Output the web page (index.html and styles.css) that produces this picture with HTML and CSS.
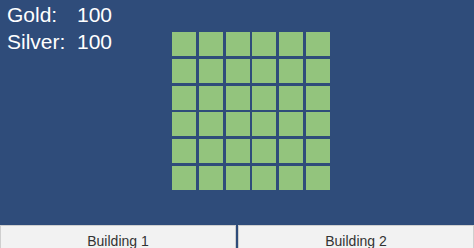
FILE: index.html
```html
<!DOCTYPE html>
<html>
<head>
<meta charset="utf-8">
<link rel="stylesheet" href="styles.css">
</head>
<body>
<div class="screen">
  <div class="main">
    <div class="stats">
      <span class="label">Gold:</span><span class="value">100</span>
      <span class="label">Silver:</span><span class="value">100</span>
    </div>
    <div class="board">
      <div class="tile"></div><div class="tile"></div><div class="tile"></div><div class="tile"></div><div class="tile"></div><div class="tile"></div>
      <div class="tile"></div><div class="tile"></div><div class="tile"></div><div class="tile"></div><div class="tile"></div><div class="tile"></div>
      <div class="tile"></div><div class="tile"></div><div class="tile"></div><div class="tile"></div><div class="tile"></div><div class="tile"></div>
      <div class="tile"></div><div class="tile"></div><div class="tile"></div><div class="tile"></div><div class="tile"></div><div class="tile"></div>
      <div class="tile"></div><div class="tile"></div><div class="tile"></div><div class="tile"></div><div class="tile"></div><div class="tile"></div>
      <div class="tile"></div><div class="tile"></div><div class="tile"></div><div class="tile"></div><div class="tile"></div><div class="tile"></div>
    </div>
  </div>
  <div class="actions">
    <button class="btn">Building 1</button>
    <button class="btn">Building 2</button>
  </div>
</div>
</body>
</html>
```
FILE: styles.css
```css
html, body {
  margin: 0;
  padding: 0;
  width: 474px;
  height: 248px;
  overflow: hidden;
  background: #2f4c7a;
}
.screen {
  display: flex;
  flex-direction: column;
  width: 474px;
  height: 248px;
}
.main {
  display: flex;
  height: 225px;
  flex: none;
}
.stats {
  display: grid;
  grid-template-columns: 70px auto;
  align-content: start;
  width: 165px;
  padding: 1px 0 0 7px;
  font-family: "Liberation Sans", Arial, sans-serif;
  font-size: 21px;
  line-height: 27px;
  color: #ffffff;
}
.board {
  display: grid;
  grid-template-columns: repeat(6, 24px);
  grid-auto-rows: 24px;
  gap: 2.8px;
  margin-top: 32px;
  align-self: start;
}
.tile {
  background: #93c47d;
}
.actions {
  display: flex;
  gap: 2px;
  flex: none;
  align-items: flex-start;
}
.btn {
  flex: 1;
  margin: 0;
  padding: 7px 0 8px 0;
  background: #f2f2f2;
  border: 1px solid #cfcfcf;
  border-radius: 0;
  font-family: "Liberation Sans", Arial, sans-serif;
  font-size: 14px;
  line-height: 16px;
  color: #323232;
  text-align: center;
}
```
